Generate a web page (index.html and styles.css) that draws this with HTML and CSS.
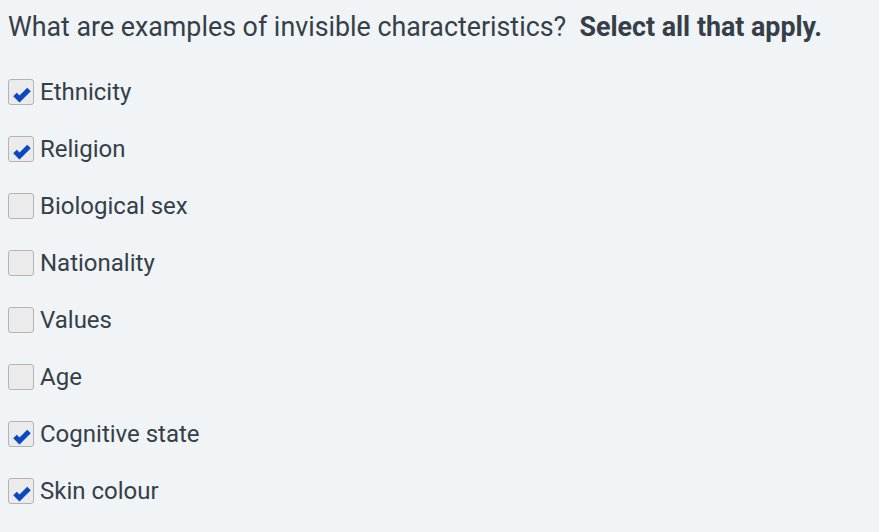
FILE: index.html
```html
<!DOCTYPE html>
<html lang="en">
<head>
    <meta charset="UTF-8">
    <title>Question</title>
    <link rel="stylesheet" href="styles.css">
</head>
<body>
    <div id="question">
        <p class="prompt">What are examples of invisible characteristics?&nbsp; <b>Select all that apply.</b></p>
        <ul class="options">
            <li class="option"><span class="box"><svg viewBox="0 0 24 24"><polyline points="6,14.5 10.5,19 20,9.5"/></svg></span>Ethnicity</li>
            <li class="option"><span class="box"><svg viewBox="0 0 24 24"><polyline points="6,14.5 10.5,19 20,9.5"/></svg></span>Religion</li>
            <li class="option"><span class="box"></span>Biological sex</li>
            <li class="option"><span class="box"></span>Nationality</li>
            <li class="option"><span class="box"></span>Values</li>
            <li class="option"><span class="box"></span>Age</li>
            <li class="option"><span class="box"><svg viewBox="0 0 24 24"><polyline points="6,14.5 10.5,19 20,9.5"/></svg></span>Cognitive state</li>
            <li class="option"><span class="box"><svg viewBox="0 0 24 24"><polyline points="6,14.5 10.5,19 20,9.5"/></svg></span>Skin colour</li>
        </ul>
    </div>
</body>
</html>
```
FILE: styles.css
```css
*{
    padding:0;
    margin:0;
}
body{
    background:#f0f4f6;
    color:#363f48;
    font-family:Roboto, "Liberation Sans", sans-serif;
}
#question{
    padding:8px 8px 0 8px;
}
.prompt{
    font-size:26.8px;
    line-height:38px;
    margin-bottom:17px;
}
.prompt b{
    font-weight:700;
}
.options{
    list-style:none;
}
.option{
    display:flex;
    align-items:center;
    height:57px;
    font-size:24px;
}
.box{
    width:24px;
    height:24px;
    border:1px solid #b3b3b3;
    border-radius:3px;
    background:#ebebeb;
    margin-right:6px;
    flex:none;
}
.box svg{
    display:block;
    width:24px;
    height:24px;
    fill:none;
    stroke:#0b47c2;
    stroke-width:5;
}
```
